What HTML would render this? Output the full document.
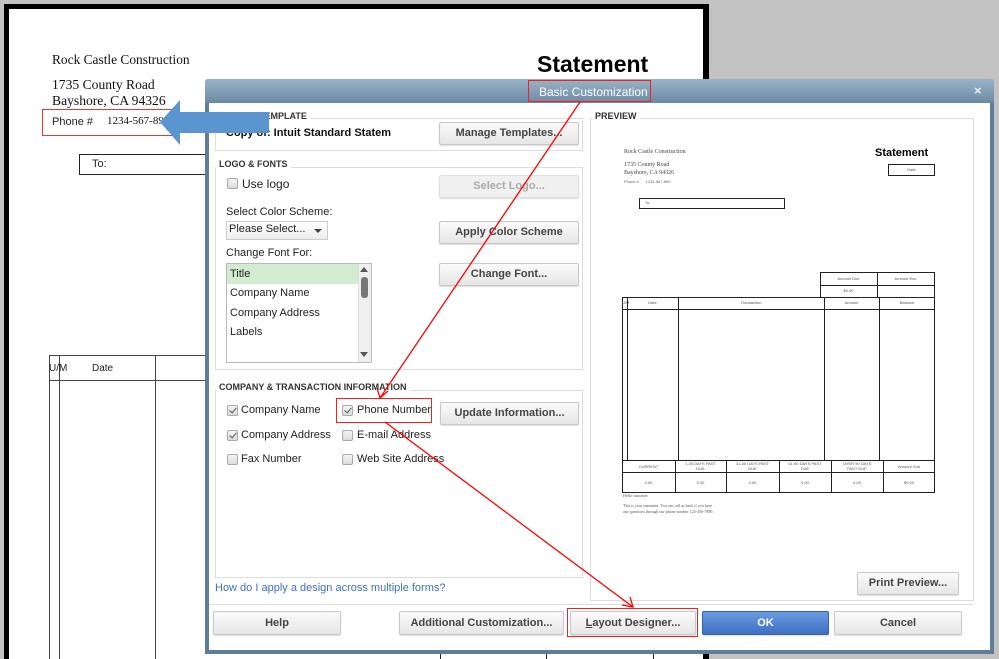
<!DOCTYPE html>
<html><head><meta charset="utf-8"><style>
*{box-sizing:border-box;margin:0;padding:0}
html{width:999px;height:659px;overflow:hidden}
body{width:999px;height:659px;overflow:hidden;background:#c3c3c3;position:relative;font-family:"Liberation Sans",sans-serif;font-size:11px;color:#222}
.a{position:absolute}
.serif{font-family:"Liberation Serif",serif;color:#111}
.btn{position:absolute;border:1px solid #c8c8c8;border-radius:2px;background:linear-gradient(#fafafa,#e6e6e6);text-align:center;font-weight:bold;color:#444;font-size:11px;box-shadow:0 1px 1px #ddd}
.sec{position:absolute;border:1px solid #ddd;background:#fff}
.lbl{position:absolute;font-size:9px;font-weight:bold;color:#333;background:#fff;padding:0 3px}
.cb{position:absolute;width:11px;height:11px;border:1px solid #aaa;border-radius:2px;background:linear-gradient(#f4f4f4,#dcdcdc)}
.cb.on::after{content:"";position:absolute;left:3px;top:0px;width:3px;height:6px;border:solid #555;border-width:0 1.5px 1.5px 0;transform:rotate(40deg)}
.t{position:absolute;font-size:11px;color:#222;white-space:nowrap}
.p{position:absolute;border:1px solid #222}
.pt{position:absolute;font-size:4px;color:#555;text-align:center;white-space:nowrap}
</style></head><body>
<div class="a" style="left:4px;top:4px;width:705px;height:655px;background:#000"></div>
<div class="a" style="left:9px;top:9px;width:694px;height:650px;background:#fff"></div>
<div class="a serif" style="left:52px;top:52px;font-size:13.4px">Rock Castle Construction</div>
<div class="a serif" style="left:52px;top:77px;font-size:13.6px">1735 County Road</div>
<div class="a serif" style="left:52px;top:93px;font-size:13.6px">Bayshore, CA 94326</div>
<div class="a" style="left:42px;top:109px;width:138px;height:27px;border:1px solid #e33"></div>
<div class="a" style="left:52px;top:116px;font-size:11px;color:#222">Phone #</div>
<div class="a serif" style="left:107px;top:115px;font-size:11px">1234-567-890</div>
<div class="a" style="left:79px;top:154px;width:140px;height:21px;border:1px solid #222"></div>
<div class="a" style="left:92px;top:158px;font-size:11px">To:</div>
<div class="a" style="left:537px;top:51px;font-size:23px;font-weight:bold;color:#000">Statement</div>
<div class="a" style="left:49px;top:355px;width:170px;height:304px;border-top:1px solid #444;border-left:1px solid #444"></div>
<div class="a" style="left:49px;top:380px;width:170px;border-top:1px solid #444"></div>
<div class="a" style="left:59px;top:355px;height:304px;border-left:1px solid #444"></div>
<div class="a" style="left:155px;top:355px;height:304px;border-left:1px solid #444"></div>
<div class="a" style="left:49px;top:363px;font-size:10px">U/M</div>
<div class="a" style="left:92px;top:363px;font-size:10px">Date</div>
<div class="a" style="left:440px;top:653px;height:6px;border-left:1px solid #222"></div>
<div class="a" style="left:546px;top:653px;height:6px;border-left:1px solid #222"></div>
<div class="a" style="left:653px;top:653px;height:6px;border-left:1px solid #222"></div>

<div class="a" style="left:205px;top:79px;width:789px;height:575px;background:#5f7d97;border-radius:3px 3px 0 0"></div>
<div class="a" style="left:205px;top:79px;width:789px;height:24px;background:linear-gradient(#9bb3c8,#6c8aa4);border-radius:3px 3px 0 0"></div>
<div class="a" style="left:209px;top:103px;width:781px;height:547px;background:#fff"></div>
<div class="a" style="left:528px;top:80px;width:123px;height:22px;border:1px solid #e22"></div>
<div class="a" style="left:539px;top:85px;font-size:12px;color:#fff">Basic Customization</div>
<div class="a" style="left:974px;top:83px;font-size:13px;color:#e8eef3;font-weight:bold">×</div>

<div class="sec" style="left:215px;top:118px;width:368px;height:33px"></div>
<div class="lbl" style="left:218px;top:111px">SELECT TEMPLATE</div>
<div class="a" style="left:226px;top:127px;font-size:11px;font-weight:bold;color:#111">Copy of: Intuit Standard Statem</div>
<div class="btn" style="left:439px;top:122px;width:140px;height:23px;line-height:21px">Manage Templates...</div>

<div class="sec" style="left:215px;top:167px;width:368px;height:203px"></div>
<div class="lbl" style="left:216px;top:159px">LOGO &amp; FONTS</div>
<div class="cb" style="left:227px;top:178px"></div>
<div class="t" style="left:242px;top:177px;font-size:12px">Use logo</div>
<div class="btn" style="left:439px;top:175px;width:140px;height:23px;line-height:21px;color:#aaa;background:#f0f0f0;border-color:#e0e0e0">Select Logo...</div>
<div class="t" style="left:226px;top:206px">Select Color Scheme:</div>
<div class="a" style="left:226px;top:221px;width:102px;height:19px;border:1px solid #ccc;background:linear-gradient(#fff,#ececec)"></div>
<div class="t" style="left:229px;top:223px">Please Select...</div>
<div class="a" style="left:314px;top:229px;border:4px solid transparent;border-top:4px solid #444"></div>
<div class="btn" style="left:439px;top:221px;width:140px;height:23px;line-height:21px">Apply Color Scheme</div>
<div class="t" style="left:226px;top:247px">Change Font For:</div>
<div class="a" style="left:226px;top:263px;width:146px;height:100px;border:1px solid #bbb;background:#fff"></div>
<div class="a" style="left:227px;top:264px;width:131px;height:20px;background:#d3ebd0"></div>
<div class="t" style="left:230px;top:268px">Title</div>
<div class="t" style="left:230px;top:287px">Company Name</div>
<div class="t" style="left:230px;top:307px">Company Address</div>
<div class="t" style="left:230px;top:326px">Labels</div>
<div class="a" style="left:358px;top:264px;width:13px;height:98px;background:#f0f0f0;border-left:1px solid #ddd"></div>
<div class="a" style="left:360px;top:267px;border:4px solid transparent;border-bottom:5px solid #555;border-top:none"></div>
<div class="a" style="left:361px;top:277px;width:7px;height:21px;background:#777;border-radius:3px"></div>
<div class="a" style="left:360px;top:352px;border:4px solid transparent;border-top:5px solid #555;border-bottom:none"></div>
<div class="btn" style="left:439px;top:263px;width:140px;height:23px;line-height:21px">Change Font...</div>

<div class="sec" style="left:215px;top:390px;width:368px;height:188px"></div>
<div class="lbl" style="left:216px;top:382px">COMPANY &amp; TRANSACTION INFORMATION</div>
<div class="cb on" style="left:227px;top:405px"></div><div class="t" style="left:241px;top:404px">Company Name</div>
<div class="cb on" style="left:227px;top:430px"></div><div class="t" style="left:241px;top:429px">Company Address</div>
<div class="cb" style="left:227px;top:454px"></div><div class="t" style="left:241px;top:453px">Fax Number</div>
<div class="cb on" style="left:342px;top:405px"></div><div class="t" style="left:357px;top:404px">Phone Number</div>
<div class="cb" style="left:342px;top:430px"></div><div class="t" style="left:357px;top:429px">E-mail Address</div>
<div class="cb" style="left:342px;top:454px"></div><div class="t" style="left:357px;top:453px">Web Site Address</div>
<div class="a" style="left:336px;top:398px;width:96px;height:25px;border:1px solid #e22"></div>
<div class="btn" style="left:440px;top:402px;width:139px;height:23px;line-height:21px">Update Information...</div>
<div class="t" style="left:215px;top:582px;color:#3d6fc9">How do I apply a design across multiple forms?</div>

<div class="sec" style="left:590px;top:118px;width:384px;height:483px"></div>
<div class="lbl" style="left:592px;top:111px">PREVIEW</div>
<div class="a serif" style="left:624px;top:149px;font-size:6px;color:#444">Rock Castle Construction</div>
<div class="a serif" style="left:624px;top:161px;font-size:6px;color:#444;line-height:8px">1735 County Road<br>Bayshore, CA 94326</div>
<div class="a" style="left:624px;top:179px;font-size:4px;color:#666">Phone #&nbsp;&nbsp;&nbsp;&nbsp;&nbsp;&nbsp;1234-567-890</div>
<div class="a" style="left:875px;top:147px;font-size:11px;font-weight:bold;color:#000">Statement</div>
<div class="p" style="left:888px;top:164px;width:47px;height:12px"></div><div class="pt" style="left:888px;top:167px;width:47px">Date</div>
<div class="p" style="left:639px;top:198px;width:146px;height:11px"></div><div class="pt" style="left:645px;top:200px">To:</div>
<div class="p" style="left:820px;top:272px;width:115px;height:26px"></div>
<div class="a" style="left:820px;top:285px;width:115px;border-top:1px solid #222"></div>
<div class="a" style="left:877px;top:272px;height:26px;border-left:1px solid #222"></div>
<div class="pt" style="left:820px;top:276px;width:57px">Amount Due</div>
<div class="pt" style="left:877px;top:276px;width:58px">Amount Enc.</div>
<div class="pt" style="left:820px;top:288px;width:57px">$0.00</div>
<div class="p" style="left:622px;top:297px;width:313px;height:196px"></div>
<div class="a" style="left:622px;top:309px;width:313px;border-top:1px solid #222"></div>
<div class="a" style="left:627px;top:297px;height:163px;border-left:1px solid #222"></div>
<div class="a" style="left:678px;top:297px;height:163px;border-left:1px solid #222"></div>
<div class="a" style="left:824px;top:297px;height:163px;border-left:1px solid #222"></div>
<div class="a" style="left:879px;top:297px;height:163px;border-left:1px solid #222"></div>
<div class="pt" style="left:622px;top:300px">U/M</div>
<div class="pt" style="left:627px;top:300px;width:51px">Date</div>
<div class="pt" style="left:678px;top:300px;width:146px">Transaction</div>
<div class="pt" style="left:824px;top:300px;width:55px">Amount</div>
<div class="pt" style="left:879px;top:300px;width:56px">Balance</div>
<div class="a" style="left:622px;top:460px;width:313px;border-top:1px solid #222"></div>
<div class="a" style="left:622px;top:472px;width:313px;border-top:1px solid #222"></div>
<div class="a" style="left:675px;top:460px;height:33px;border-left:1px solid #222"></div>
<div class="a" style="left:726px;top:460px;height:33px;border-left:1px solid #222"></div>
<div class="a" style="left:779px;top:460px;height:33px;border-left:1px solid #222"></div>
<div class="a" style="left:831px;top:460px;height:33px;border-left:1px solid #222"></div>
<div class="a" style="left:883px;top:460px;height:33px;border-left:1px solid #222"></div>
<div class="pt" style="left:622px;top:464px;width:53px">CURRENT</div>
<div class="pt" style="left:675px;top:461px;width:51px">1-30 DAYS PAST<br>DUE</div>
<div class="pt" style="left:726px;top:461px;width:53px">31-60 DAYS PAST<br>DUE</div>
<div class="pt" style="left:779px;top:461px;width:52px">61-90 DAYS PAST<br>DUE</div>
<div class="pt" style="left:831px;top:461px;width:52px">OVER 90 DAYS<br>PAST DUE</div>
<div class="pt" style="left:883px;top:464px;width:52px">Amount Due</div>
<div class="pt" style="left:622px;top:480px;width:53px">0.00</div>
<div class="pt" style="left:675px;top:480px;width:51px">0.00</div>
<div class="pt" style="left:726px;top:480px;width:53px">0.00</div>
<div class="pt" style="left:779px;top:480px;width:52px">0.00</div>
<div class="pt" style="left:831px;top:480px;width:52px">0.00</div>
<div class="pt" style="left:883px;top:480px;width:52px">$0.00</div>
<div class="a serif" style="left:623px;top:493px;font-size:4px;color:#555">Hello customer,</div>
<div class="a serif" style="left:623px;top:503px;font-size:4px;color:#555;line-height:6px">This is your statement. You can call us back if you have<br>any questions through our phone number 123-456-7890.</div>
<div class="btn" style="left:857px;top:572px;width:102px;height:23px;line-height:21px">Print Preview...</div>

<div class="a" style="left:209px;top:604px;width:764px;border-top:1px solid #ddd"></div>
<div class="btn" style="left:213px;top:611px;width:128px;height:24px;line-height:22px">Help</div>
<div class="btn" style="left:399px;top:611px;width:165px;height:24px;line-height:22px">Additional Customization...</div>
<div class="btn" style="left:570px;top:611px;width:126px;height:24px;line-height:22px"><u>L</u>ayout Designer...</div>
<div class="a" style="left:567px;top:608px;width:131px;height:29px;border:1px solid #e22"></div>
<div class="btn" style="left:702px;top:611px;width:127px;height:24px;line-height:22px;background:linear-gradient(#6a9be0,#3e6fc4);border-color:#3a62a8;color:#fff">OK</div>
<div class="btn" style="left:834px;top:611px;width:128px;height:24px;line-height:22px">Cancel</div>

<svg class="a" style="left:0;top:0" width="999" height="659">
<polygon points="160,122 180,100 180,112 269,112 269,133 180,133 180,145" fill="#5a95d0"/>
<line x1="580" y1="102" x2="380" y2="398" stroke="#f00" stroke-width="1.3"/>
<polyline points="377,388 380,398 388,391" fill="none" stroke="#f00" stroke-width="1.3"/>
<line x1="385" y1="422" x2="633" y2="607" stroke="#f00" stroke-width="1.3"/>
<polyline points="622,605 633,607 630,597" fill="none" stroke="#f00" stroke-width="1.3"/>
</svg>
</body></html>
